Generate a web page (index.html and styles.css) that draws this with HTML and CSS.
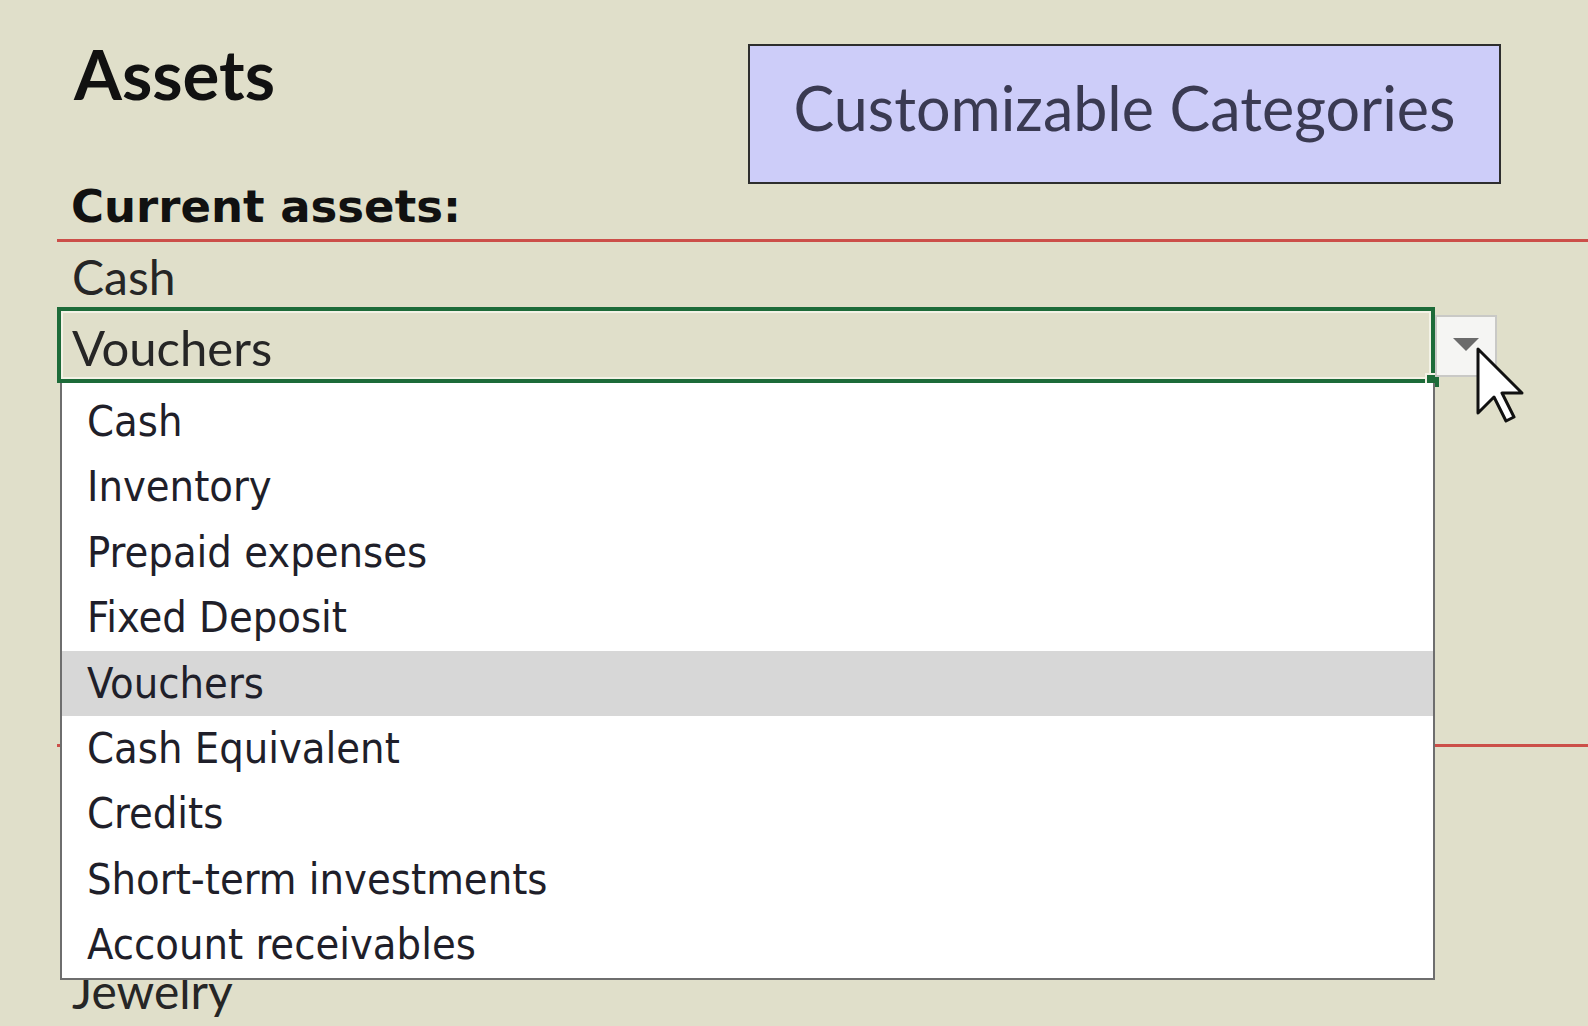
FILE: index.html
```html
<!DOCTYPE html>
<html lang="en">
<head>
  <meta charset="UTF-8">
  <title>Balance Sheet - Assets</title>
  <link rel="stylesheet" href="styles.css">
</head>
<body>
  <div class="sheet">
    <h1 class="title">Assets</h1>
    <div class="section">Current assets:</div>

    <div class="rows">
      <div class="row">Cash</div>

      <div class="cell-active">
        Vouchers
        <span class="fill-handle"></span>
        <div class="drop-btn"><span class="caret"></span></div>

        <ul class="drop-list">
          <li>Cash</li>
          <li>Inventory</li>
          <li>Prepaid expenses</li>
          <li>Fixed Deposit</li>
          <li class="hover">Vouchers</li>
          <li>Cash Equivalent</li>
          <li>Credits</li>
          <li>Short-term investments</li>
          <li>Account receivables</li>
        </ul>
      </div>

      <div class="blank tall"></div>
      <div class="rule"></div>
      <div class="blank"></div>
      <div class="blank"></div>
      <div class="blank"></div>
      <div class="row last">Jewelry</div>
    </div>

    <div class="callout">Customizable Categories</div>

    <!-- mouse pointer over the dropdown arrow -->
    <svg class="pointer" width="50" height="78" viewBox="0 0 50 78">
      <path d="M2 2 L2 66 L18 50 L30 74 L38 70 L26 46 L46 46 Z" fill="#fff" stroke="#111" stroke-width="3" stroke-linejoin="round"/>
    </svg>
  </div>
</body>
</html>
```

FILE: styles.css
```css
body {
  margin: 0;
  background: #e0dfca;
  color: #262626;
  font-family: Lato, "Liberation Sans", sans-serif;
  overflow: hidden;
}

.sheet {
  position: relative;
  height: 1026px;
}

.title {
  margin: 0;
  padding: 34px 0 0 74px;
  font-size: 69px;
  line-height: 80px;
  font-weight: 700;
  color: #111;
}

.section {
  margin-top: 63px;
  padding: 0 0 2px 71px;
  font-family: "DejaVu Sans", sans-serif;
  font-size: 45px;
  line-height: 60px;
  font-weight: 700;
  color: #111;
}

.rows {
  margin-left: 57px;
  border-top: 3px solid #cc4f49;
}

.row {
  height: 65px;
  padding: 5px 0 0 15px;
  box-sizing: border-box;
  font-size: 48px;
  line-height: 60px;
}

.row.last {
  height: 62px;
  padding-top: 0;
  line-height: 62px;
}

.cell-active {
  position: relative;
  width: 1378px;
  height: 76px;
  box-sizing: border-box;
  padding: 5px 0 0 11px;
  border: 4px solid #1d6b39;
  box-shadow: inset 0 0 0 2px #f3f2e6;
  font-size: 49px;
  line-height: 63px;
}

.fill-handle {
  position: absolute;
  right: -8px;
  bottom: -8px;
  width: 12px;
  height: 12px;
  background: #1d6b39;
  border-top: 2px solid #f3f2e6;
  border-left: 2px solid #f3f2e6;
}

.drop-btn {
  position: absolute;
  left: calc(100% + 4px);
  top: 4px;
  width: 62px;
  height: 62px;
  box-sizing: border-box;
  background: #f5f5f3;
  border: 2px solid #c9c9c6;
  display: flex;
  align-items: center;
  justify-content: center;
}

.caret {
  width: 0;
  height: 0;
  border-left: 13px solid transparent;
  border-right: 13px solid transparent;
  border-top: 13px solid #6b6b6b;
  margin-top: -4px;
}

.drop-list {
  position: absolute;
  left: -1px;
  top: calc(100% + 4px);
  width: 1375px;
  box-sizing: border-box;
  margin: 0;
  padding: 6px 0 0;
  list-style: none;
  background: #fff;
  border: 2px solid #6e6e6e;
  border-top: none;
  font-family: "DejaVu Sans Condensed", "DejaVu Sans", sans-serif;
  font-stretch: condensed;
  font-size: 43px;
  color: #1f1f2a;
  z-index: 2;
}

.drop-list li {
  height: 65.4px;
  line-height: 65.4px;
  padding-left: 25px;
}

.drop-list li.hover {
  background: #d7d7d7;
}

.blank {
  height: 71px;
}

.blank.tall {
  height: 361px;
}

.rule {
  border-top: 3px solid #cc4f49;
}

.callout {
  position: absolute;
  left: 748px;
  top: 44px;
  width: 753px;
  height: 140px;
  box-sizing: border-box;
  padding-bottom: 12px;
  border: 2px solid #2e2e2e;
  background: #cdcdf9;
  color: #3a3a52;
  font-size: 61px;
  line-height: 124px;
  text-align: center;
}

.pointer {
  position: absolute;
  left: 1476px;
  top: 347px;
  z-index: 3;
}
```
